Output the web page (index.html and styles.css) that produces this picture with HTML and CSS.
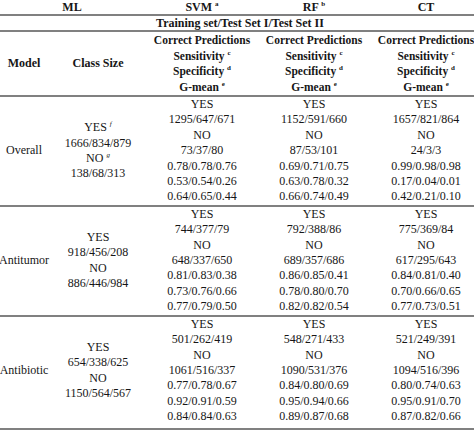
FILE: index.html
```html
<!DOCTYPE html>
<html>
<head>
<meta charset="utf-8">
<link rel="stylesheet" href="styles.css">
</head>
<body>
<table class="grid">
  <colgroup>
    <col class="c-model"><col class="c-size"><col class="c-ml"><col class="c-ml"><col class="c-ml">
  </colgroup>
  <tr class="r-top rule">
    <th colspan="2">ML</th>
    <th>SVM <sup>a</sup></th>
    <th>RF <sup>b</sup></th>
    <th>CT</th>
  </tr>
  <tr class="r-set rule">
    <th colspan="5">Training set/Test Set I/Test Set II</th>
  </tr>
  <tr class="r-head rule">
    <th>Model</th>
    <th>Class Size</th>
    <th>Correct Predictions<br>Sensitivity <sup>c</sup><br>Specificity <sup>d</sup><br>G-mean <sup>e</sup></th>
    <th>Correct Predictions<br>Sensitivity <sup>c</sup><br>Specificity <sup>d</sup><br>G-mean <sup>e</sup></th>
    <th>Correct Predictions<br>Sensitivity <sup>c</sup><br>Specificity <sup>d</sup><br>G-mean <sup>e</sup></th>
  </tr>
  <tr class="r-sec rule">
    <td>Overall</td>
    <td>YES <sup class="it">f</sup><br>1666/834/879<br>NO <sup class="it">g</sup><br>138/68/313</td>
    <td>YES<br>1295/647/671<br>NO<br>73/37/80<br>0.78/0.78/0.76<br>0.53/0.54/0.26<br>0.64/0.65/0.44</td>
    <td>YES<br>1152/591/660<br>NO<br>87/53/101<br>0.69/0.71/0.75<br>0.63/0.78/0.32<br>0.66/0.74/0.49</td>
    <td>YES<br>1657/821/864<br>NO<br>24/3/3<br>0.99/0.98/0.98<br>0.17/0.04/0.01<br>0.42/0.21/0.10</td>
  </tr>
  <tr class="r-sec rule">
    <td>Antitumor</td>
    <td>YES<br>918/456/208<br>NO<br>886/446/984</td>
    <td>YES<br>744/377/79<br>NO<br>648/337/650<br>0.81/0.83/0.38<br>0.73/0.76/0.66<br>0.77/0.79/0.50</td>
    <td>YES<br>792/388/86<br>NO<br>689/357/686<br>0.86/0.85/0.41<br>0.78/0.80/0.70<br>0.82/0.82/0.54</td>
    <td>YES<br>775/369/84<br>NO<br>617/295/643<br>0.84/0.81/0.40<br>0.70/0.66/0.65<br>0.77/0.73/0.51</td>
  </tr>
  <tr class="r-sec r-last rule">
    <td>Antibiotic</td>
    <td>YES<br>654/338/625<br>NO<br>1150/564/567</td>
    <td>YES<br>501/262/419<br>NO<br>1061/516/337<br>0.77/0.78/0.67<br>0.92/0.91/0.59<br>0.84/0.84/0.63</td>
    <td>YES<br>548/271/433<br>NO<br>1090/531/376<br>0.84/0.80/0.69<br>0.95/0.94/0.66<br>0.89/0.87/0.68</td>
    <td>YES<br>521/249/391<br>NO<br>1094/516/396<br>0.80/0.74/0.63<br>0.95/0.91/0.70<br>0.87/0.82/0.66</td>
  </tr>
</table>
<p class="notes"><sup>a</sup> Ten-fold cross validation; <sup>b</sup> out of bag; <sup>c</sup> the ratio of true positives to the sum of true positives and false negatives.</p>
</body>
</html>
```
FILE: styles.css
```css
html, body {
  margin: 0;
  padding: 0;
  background: #ffffff;
  overflow: hidden;
}
body {
  font-family: "Liberation Serif", "Times New Roman", serif;
  font-size: 12px;
  color: #161616;
}
.grid {
  border-collapse: collapse;
  table-layout: fixed;
  width: 484px;
  margin-left: -2px;
}
.c-model { width: 52px; }
.c-size { width: 96px; }
.c-ml { width: 112px; }
.grid th, .grid td {
  padding: 0;
  text-align: center;
  vertical-align: middle;
  white-space: nowrap;
}
.grid th {
  font-weight: bold;
}
.rule th, .rule td {
  border-bottom: 2px solid #808080;
}
.r-top th {
  height: 14px;
  line-height: 14px;
}
.r-set th {
  height: 14px;
  line-height: 14px;
}
.r-head th {
  font-size: 11.5px;
  line-height: 15.5px;
  padding-top: 1px;
}
.r-head th:nth-child(1), .r-head th:nth-child(2) {
  font-size: 12px;
}
.r-sec td {
  line-height: 15.4px;
}
.r-last td {
  padding-bottom: 3px;
}
sup {
  font-size: 7px;
  line-height: 0;
  vertical-align: 5px;
}
sup.it {
  font-style: italic;
}
.notes {
  margin: 1px 0 0 8px;
  font-size: 10px;
  line-height: 12px;
  white-space: nowrap;
}
.notes sup {
  font-style: italic;
  font-size: 6px;
}
```
